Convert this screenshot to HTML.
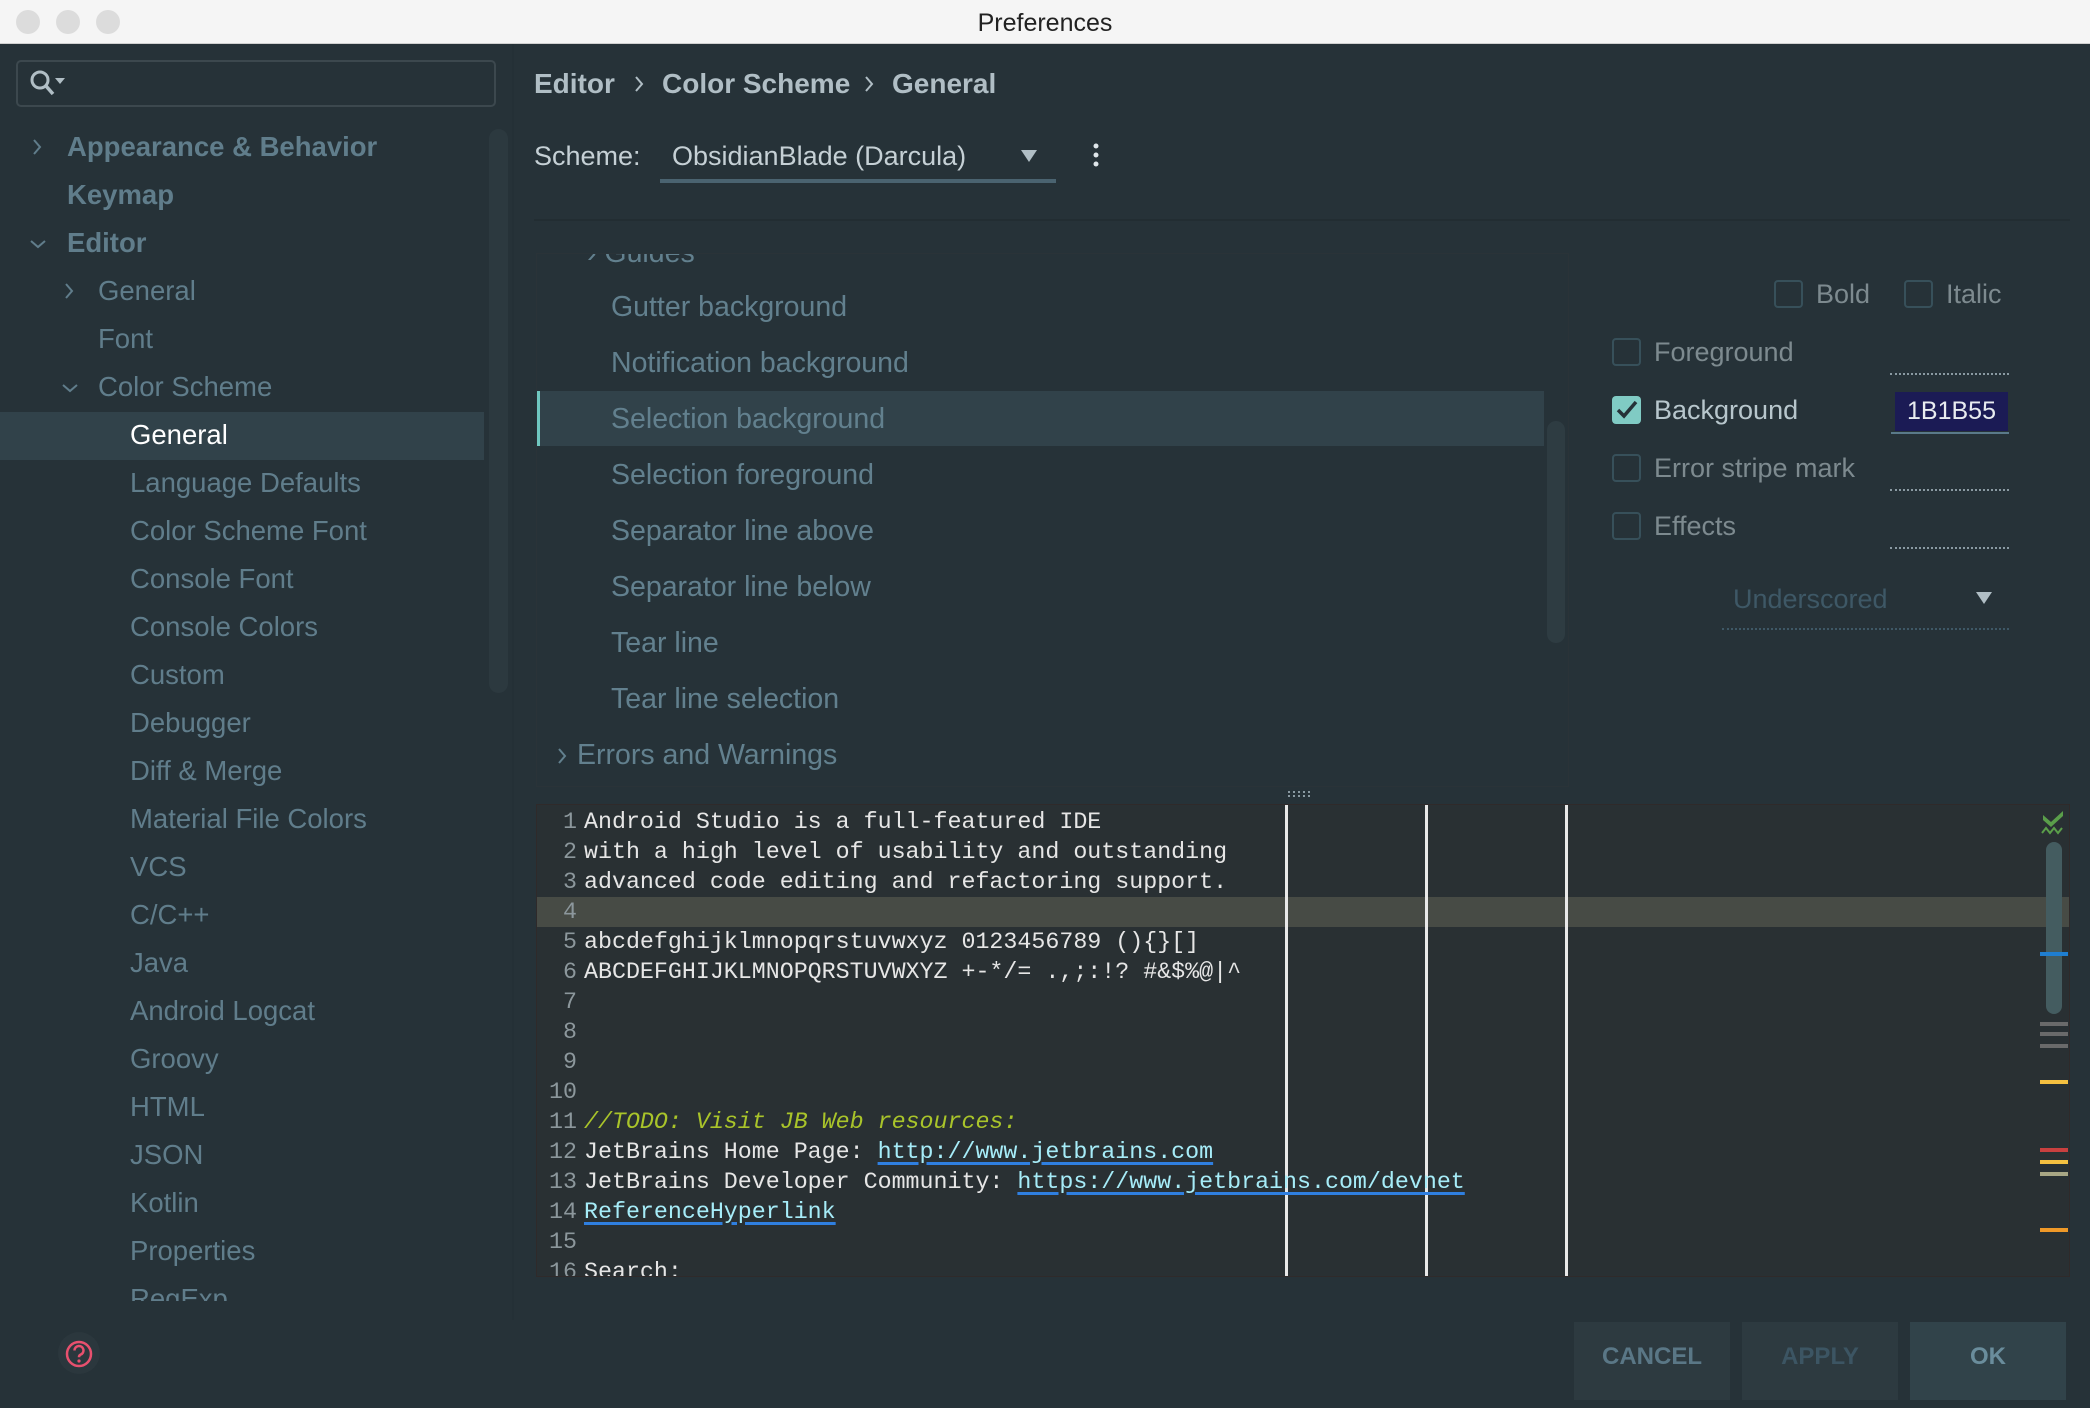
<!DOCTYPE html>
<html><head><meta charset="utf-8"><style>
*{margin:0;padding:0;box-sizing:border-box}
body{width:2090px;height:1408px;background:#263238;font-family:"Liberation Sans",sans-serif;position:relative;overflow:hidden}
.a{position:absolute;white-space:nowrap}
.tb{left:0;top:0;width:2090px;height:44px;background:#f5f5f5;border-bottom:1px solid #d0d0d0}
.dot{width:24px;height:24px;border-radius:50%;background:#dcdcdc;top:10px}
.tr{font-size:27.5px;line-height:30px;color:#607d8b}
.b{font-weight:bold}
.rl{font-size:28.5px;line-height:30px;color:#62808e}
.cb{width:29px;height:28px;border:2px solid #37505a;border-radius:4px}
.opt{font-size:27px;color:#7d8a8f;line-height:30px}
.dl{border-bottom:2px dotted #8a9aa2;height:0}
.code{font-family:"Liberation Mono",monospace;font-size:23.3px;line-height:30px;color:#e6e6e6}
.ln{color:#8c979c;text-align:right;width:40px;display:inline-block;margin-right:7px}
.lk{color:#a6ecf8;text-decoration:underline;text-decoration-color:#2f7fe0;text-underline-offset:4px;text-decoration-thickness:3px}
.mk{left:2040px;width:28px;height:4px}
.btn{top:1322px;height:78px;width:156px;background:#2d3a40;color:#5a7786;font-size:24px;font-weight:bold;text-align:center;line-height:70px}
</style></head><body>
<div class="a tb"></div>
<div class="a dot" style="left:16px"></div><div class="a dot" style="left:56px"></div><div class="a dot" style="left:96px"></div>
<div class="a" style="left:0;width:2090px;top:9px;text-align:center;font-size:25px;color:#222">Preferences</div>

<!-- sidebar -->
<div class="a" style="left:16px;top:60px;width:480px;height:47px;border:2px solid #3c484e;border-radius:5px"></div>
<svg class="a" style="left:28px;top:68px" width="40" height="30"><circle cx="12" cy="12" r="8" fill="none" stroke="#b0bec5" stroke-width="3"/><line x1="18" y1="18" x2="25" y2="26" stroke="#b0bec5" stroke-width="3.5"/><polygon points="27,10 37,10 32,16" fill="#b0bec5"/></svg>
<div class="a" style="left:489px;top:129px;width:19px;height:564px;background:#2c393f;border-radius:10px"></div>
<div class="a" style="left:512px;top:44px;width:2px;height:1276px;background:#243036"></div>
<div class="a" style="left:0;top:412px;width:484px;height:48px;background:#31424a"></div>
<div class="a" style="left:0;top:129px;width:484px;height:1172px;overflow:hidden">
<svg class="a" style="left:30px;top:8px" width="14" height="20"><path d="M4 3l6 7-6 7" fill="none" stroke="#607d8b" stroke-width="2"/></svg>
<div class="a tr b" style="left:67px;top:3px">Appearance &amp; Behavior</div>
<div class="a tr b" style="left:67px;top:51px">Keymap</div>
<svg class="a" style="left:28px;top:108px" width="20" height="14"><path d="M3 4l7 6 7-6" fill="none" stroke="#607d8b" stroke-width="2"/></svg>
<div class="a tr b" style="left:67px;top:99px">Editor</div>
<svg class="a" style="left:62px;top:152px" width="14" height="20"><path d="M4 3l6 7-6 7" fill="none" stroke="#607d8b" stroke-width="2"/></svg>
<div class="a tr" style="left:98px;top:147px">General</div>
<div class="a tr" style="left:98px;top:195px">Font</div>
<svg class="a" style="left:60px;top:252px" width="20" height="14"><path d="M3 4l7 6 7-6" fill="none" stroke="#607d8b" stroke-width="2"/></svg>
<div class="a tr" style="left:98px;top:243px">Color Scheme</div>
<div class="a tr" style="left:130px;top:291px;color:#fff">General</div>
<div class="a tr" style="left:130px;top:339px">Language Defaults</div>
<div class="a tr" style="left:130px;top:387px">Color Scheme Font</div>
<div class="a tr" style="left:130px;top:435px">Console Font</div>
<div class="a tr" style="left:130px;top:483px">Console Colors</div>
<div class="a tr" style="left:130px;top:531px">Custom</div>
<div class="a tr" style="left:130px;top:579px">Debugger</div>
<div class="a tr" style="left:130px;top:627px">Diff &amp; Merge</div>
<div class="a tr" style="left:130px;top:675px">Material File Colors</div>
<div class="a tr" style="left:130px;top:723px">VCS</div>
<div class="a tr" style="left:130px;top:771px">C/C++</div>
<div class="a tr" style="left:130px;top:819px">Java</div>
<div class="a tr" style="left:130px;top:867px">Android Logcat</div>
<div class="a tr" style="left:130px;top:915px">Groovy</div>
<div class="a tr" style="left:130px;top:963px">HTML</div>
<div class="a tr" style="left:130px;top:1011px">JSON</div>
<div class="a tr" style="left:130px;top:1059px">Kotlin</div>
<div class="a tr" style="left:130px;top:1107px">Properties</div>
<div class="a tr" style="left:130px;top:1155px">RegExp</div>
</div>
<div class="a" style="left:58px;top:1332px;width:42px;height:42px;border-radius:50%;background:#2b373d"></div>
<svg class="a" style="left:62px;top:1337px" width="34" height="34"><circle cx="17" cy="17" r="12" fill="none" stroke="#e8506e" stroke-width="2.5"/><path d="M12.5 13.5a4.5 4.5 0 1 1 6 4.2c-1.2.5-1.5 1.2-1.5 2.5" fill="none" stroke="#e8506e" stroke-width="2.5"/><circle cx="17" cy="24" r="1.6" fill="#e8506e"/></svg>

<!-- header -->
<div class="a b" style="left:534px;top:68px;font-size:28px;color:#b0bec5">Editor</div>
<svg class="a" style="left:632px;top:74px" width="14" height="20"><path d="M4 3l6 7-6 7" fill="none" stroke="#b0bec5" stroke-width="2"/></svg>
<div class="a b" style="left:662px;top:68px;font-size:28px;color:#b0bec5">Color Scheme</div>
<svg class="a" style="left:862px;top:74px" width="14" height="20"><path d="M4 3l6 7-6 7" fill="none" stroke="#b0bec5" stroke-width="2"/></svg>
<div class="a b" style="left:892px;top:68px;font-size:28px;color:#b0bec5">General</div>
<div class="a" style="left:534px;top:141px;font-size:27px;color:#c5d0d5">Scheme:</div>
<div class="a" style="left:672px;top:141px;font-size:27px;color:#c5d0d5">ObsidianBlade (Darcula)</div>
<div class="a" style="left:660px;top:179px;width:396px;height:4px;background:#4a6370"></div>
<svg class="a" style="left:1021px;top:150px" width="16" height="14"><polygon points="0,0 16,0 8,12" fill="#b0bec5"/></svg>
<svg class="a" style="left:1092px;top:142px" width="8" height="26"><circle cx="4" cy="4" r="2.5" fill="#dfe6ea"/><circle cx="4" cy="13" r="2.5" fill="#dfe6ea"/><circle cx="4" cy="22" r="2.5" fill="#dfe6ea"/></svg>
<div class="a" style="left:534px;top:219px;width:1536px;height:2px;background:#222d32"></div>

<!-- list -->
<div class="a" style="left:536px;top:253px;width:1033px;height:534px;background:#263238;border:1px solid #2a3338;overflow:hidden">
<div class="a rl" style="left:50px;top:-16px">› Guides</div>
<div class="a" style="left:0;top:137px;width:1007px;height:55px;background:#31424a;border-left:3px solid #6fc7c0"></div>
<div class="a rl" style="left:74px;top:38px">Gutter background</div>
<div class="a rl" style="left:74px;top:94px">Notification background</div>
<div class="a rl" style="left:74px;top:150px">Selection background</div>
<div class="a rl" style="left:74px;top:206px">Selection foreground</div>
<div class="a rl" style="left:74px;top:262px">Separator line above</div>
<div class="a rl" style="left:74px;top:318px">Separator line below</div>
<div class="a rl" style="left:74px;top:374px">Tear line</div>
<div class="a rl" style="left:74px;top:430px">Tear line selection</div>
<svg class="a" style="left:18px;top:492px" width="14" height="20"><path d="M4 3l6 7-6 7" fill="none" stroke="#62808e" stroke-width="2"/></svg>
<div class="a rl" style="left:40px;top:486px">Errors and Warnings</div>
<div class="a" style="left:1010px;top:167px;width:18px;height:222px;background:#2e3c42;border-radius:9px"></div>
</div>

<!-- options -->
<div class="a cb" style="left:1774px;top:280px"></div><div class="a opt" style="left:1816px;top:279px">Bold</div>
<div class="a cb" style="left:1904px;top:280px"></div><div class="a opt" style="left:1946px;top:279px">Italic</div>
<div class="a cb" style="left:1612px;top:338px"></div><div class="a opt" style="left:1654px;top:337px">Foreground</div>
<div class="a" style="left:1612px;top:396px;width:29px;height:28px;background:#80cbc4;border-radius:4px"></div>
<svg class="a" style="left:1612px;top:396px" width="29" height="28"><path d="M6 14l6 6 12-14" fill="none" stroke="#263238" stroke-width="3.5"/></svg>
<div class="a opt" style="left:1654px;top:395px;color:#b7c6cc">Background</div>
<div class="a cb" style="left:1612px;top:454px"></div><div class="a opt" style="left:1654px;top:453px">Error stripe mark</div>
<div class="a cb" style="left:1612px;top:512px"></div><div class="a opt" style="left:1654px;top:511px">Effects</div>
<div class="a dl" style="left:1890px;top:373px;width:119px"></div>
<div class="a" style="left:1895px;top:392px;width:113px;height:39px;background:#1b1b55;color:#e8ecf0;font-size:25px;text-align:center;line-height:39px">1B1B55</div>
<div class="a" style="left:1891px;top:432px;width:118px;height:2px;background:#5a7a8a"></div>
<div class="a dl" style="left:1890px;top:489px;width:119px"></div>
<div class="a dl" style="left:1890px;top:547px;width:119px"></div>
<div class="a opt" style="left:1733px;top:584px;color:#3e5866">Underscored</div>
<svg class="a" style="left:1976px;top:592px" width="16" height="14"><polygon points="0,0 16,0 8,12" fill="#b0bec5"/></svg>
<div class="a dl" style="left:1722px;top:628px;width:287px;border-color:#3e5866"></div>

<!-- editor -->
<svg class="a" style="left:1288px;top:790px" width="28" height="8"><g fill="#8a9aa2"><rect x="0" y="1" width="2" height="2"/><rect x="5" y="1" width="2" height="2"/><rect x="10" y="1" width="2" height="2"/><rect x="15" y="1" width="2" height="2"/><rect x="20" y="1" width="2" height="2"/><rect x="0" y="5" width="2" height="2"/><rect x="5" y="5" width="2" height="2"/><rect x="10" y="5" width="2" height="2"/><rect x="15" y="5" width="2" height="2"/><rect x="20" y="5" width="2" height="2"/></g></svg>
<div class="a" style="left:536px;top:804px;width:1534px;height:473px;background:#293033;border:1px solid #2f2a2a;overflow:hidden">
<div class="a" style="left:0;top:92px;width:1532px;height:30px;background:#474b45"></div>
<div class="a" style="left:748px;top:0;width:3px;height:473px;background:#e8e8e8"></div>
<div class="a" style="left:888px;top:0;width:3px;height:473px;background:#e8e8e8"></div>
<div class="a" style="left:1028px;top:0;width:3px;height:473px;background:#e8e8e8"></div>
<div class="a code" style="left:0;top:2px">
<div><span class="ln">1</span>Android Studio is a full-featured IDE</div>
<div><span class="ln">2</span>with a high level of usability and outstanding</div>
<div><span class="ln">3</span>advanced code editing and refactoring support.</div>
<div><span class="ln">4</span></div>
<div><span class="ln">5</span>abcdefghijklmnopqrstuvwxyz 0123456789 (){}[]</div>
<div><span class="ln">6</span>ABCDEFGHIJKLMNOPQRSTUVWXYZ +-*/= .,;:!? #&amp;$%@|^</div>
<div><span class="ln">7</span></div>
<div><span class="ln">8</span></div>
<div><span class="ln">9</span></div>
<div><span class="ln">10</span></div>
<div><span class="ln">11</span><i style="color:#a9c42a">//TODO: Visit JB Web resources:</i></div>
<div><span class="ln">12</span>JetBrains Home Page: <span class="lk">http://www.jetbrains.com</span></div>
<div><span class="ln">13</span>JetBrains Developer Community: <span class="lk">https://www.jetbrains.com/devnet</span></div>
<div><span class="ln">14</span><span class="lk">ReferenceHyperlink</span></div>
<div><span class="ln">15</span></div>
<div><span class="ln">16</span>Search:</div>
</div>
</div>
<svg class="a" style="left:2041px;top:809px" width="24" height="26"><path d="M2 6l8 7 12-11v5l-12 11-8-7z" fill="#5a9e4a"/><path d="M1 24l4-5 4 5 4-5 4 5 4-5" fill="none" stroke="#5a9e4a" stroke-width="2"/></svg>
<div class="a" style="left:2046px;top:842px;width:16px;height:172px;background:#445c60;border-radius:8px"></div>
<div class="a mk" style="top:952px;background:#1f7ed0"></div>
<div class="a mk" style="top:1022px;background:#6a6a6a"></div>
<div class="a mk" style="top:1032px;background:#6a6a6a"></div>
<div class="a mk" style="top:1044px;background:#6a6a6a"></div>
<div class="a mk" style="top:1080px;background:#f5c040"></div>
<div class="a mk" style="top:1148px;background:#c9403f"></div>
<div class="a mk" style="top:1160px;background:#f5c040"></div>
<div class="a mk" style="top:1172px;background:#a8a684"></div>
<div class="a mk" style="top:1228px;background:#ef9828"></div>

<!-- buttons -->
<div class="a btn" style="left:1574px">CANCEL</div>
<div class="a btn" style="left:1742px;color:#3c5563">APPLY</div>
<div class="a btn" style="left:1910px;background:#31434a;color:#6a8d9c">OK</div>
</body></html>
